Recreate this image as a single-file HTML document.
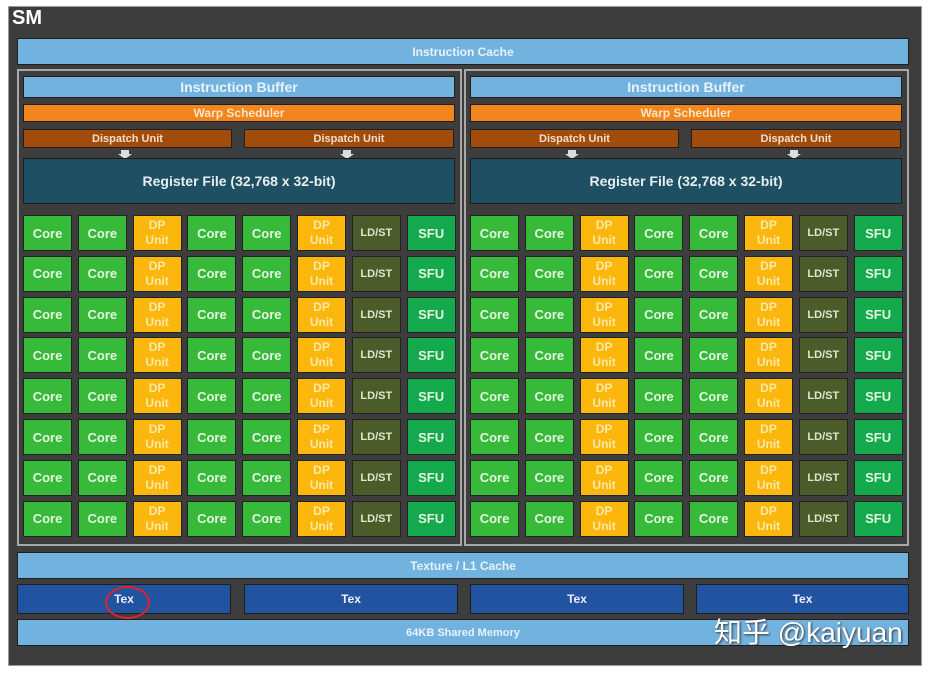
<!DOCTYPE html>
<html><head><meta charset="utf-8"><style>
*{margin:0;padding:0;box-sizing:border-box}
body{width:933px;height:674px;background:#fff;position:relative;overflow:hidden;font-family:"Liberation Sans","Noto Sans CJK SC",sans-serif;font-weight:bold}
.a{position:absolute;display:flex;align-items:center;justify-content:center;text-align:center;color:#eef;border:1px solid #1e1e1e}
.lb{background:#72b2df;color:#e8f2fa}
.c{font-size:13px;color:#e4f5e0;border:1px solid #222}
.core{background:#37ba3a}
.dp{background:#fcb70c;color:#fde8a8;line-height:15px;font-size:12px}
.ld{background:#4c5b2a;font-size:11px;color:#e0e6d0}
.sfu{background:#13a94c}
</style></head><body>
<div style="position:absolute;left:8px;top:6px;width:914px;height:660px;background:#3d3d3d;border:1px solid #9a9a9a"></div>
<div style="position:absolute;left:12px;top:7px;font-size:20px;color:#fff">SM</div>
<div class="a lb" style="left:17px;top:38px;width:892px;height:27px;font-size:12px">Instruction Cache</div>
<div id="p"></div>
<div class="a lb" style="left:17px;top:552px;width:892px;height:27px;font-size:12px">Texture / L1 Cache</div>
<div class="a" style="left:17px;top:584px;width:214px;height:30px;background:#2253a0;font-size:12px">Tex</div>
<div class="a" style="left:244px;top:584px;width:214px;height:30px;background:#2253a0;font-size:12px">Tex</div>
<div class="a" style="left:470px;top:584px;width:214px;height:30px;background:#2253a0;font-size:12px">Tex</div>
<div class="a" style="left:696px;top:584px;width:213px;height:30px;background:#2253a0;font-size:12px">Tex</div>
<div style="position:absolute;left:105px;top:586px;width:45px;height:33px;border:2px solid #e0202a;border-radius:50%"></div>
<div class="a lb" style="left:17px;top:619px;width:892px;height:27px;font-size:11px">64KB Shared Memory</div>
<div style="position:absolute;left:714px;top:611px;font-size:28px;font-weight:normal;color:#fff;text-shadow:1px 1px 2px #333;white-space:nowrap">知乎 @kaiyuan</div>
<script>
var h='';
for(var s=0;s<2;s++){
 var o=s*447;
 h+='<div style="position:absolute;left:'+(17+o)+'px;top:69px;width:445px;height:477px;border:2px solid #a8a8a8"></div>';
 h+='<div class="a lb" style="left:'+(23+o)+'px;top:76px;width:432px;height:22px;font-size:14px">Instruction Buffer</div>';
 h+='<div class="a" style="left:'+(23+o)+'px;top:104px;width:432px;height:18px;background:#f2851c;font-size:12px;color:#fde4c8">Warp Scheduler</div>';
 h+='<div class="a" style="left:'+(23+o)+'px;top:129px;width:209px;height:19px;background:#a24c0c;font-size:11px;color:#f3dccb">Dispatch Unit</div>';
 h+='<div class="a" style="left:'+(244+o)+'px;top:129px;width:210px;height:19px;background:#a24c0c;font-size:11px;color:#f3dccb">Dispatch Unit</div>';
 h+='<div style="position:absolute;left:'+(121+o)+'px;top:150px;width:8px;height:4px;background:#ddd"></div><div style="position:absolute;left:'+(118+o)+'px;top:154px;border-left:7px solid transparent;border-right:7px solid transparent;border-top:5px solid #ddd"></div>';
 h+='<div style="position:absolute;left:'+(343+o)+'px;top:150px;width:8px;height:4px;background:#ddd"></div><div style="position:absolute;left:'+(340+o)+'px;top:154px;border-left:7px solid transparent;border-right:7px solid transparent;border-top:5px solid #ddd"></div>';
 h+='<div class="a" style="left:'+(23+o)+'px;top:158px;width:432px;height:46px;background:#1e4f63;font-size:14px;color:#e6eef0">Register File (32,768 x 32-bit)</div>';
 var t=['core','core','dp','core','core','dp','ld','sfu'];
 var tx={core:'Core',dp:'DP<br>Unit',ld:'LD/ST',sfu:'SFU'};
 for(var r=0;r<8;r++)for(var c=0;c<8;c++){
  var x=23+o+c*54.8, y=215+r*40.8;
  h+='<div class="a c '+t[c]+'" style="left:'+x.toFixed(1)+'px;top:'+y.toFixed(1)+'px;width:49px;height:36px">'+tx[t[c]]+'</div>';
 }
}
document.getElementById('p').innerHTML=h;
</script>
</body></html>
